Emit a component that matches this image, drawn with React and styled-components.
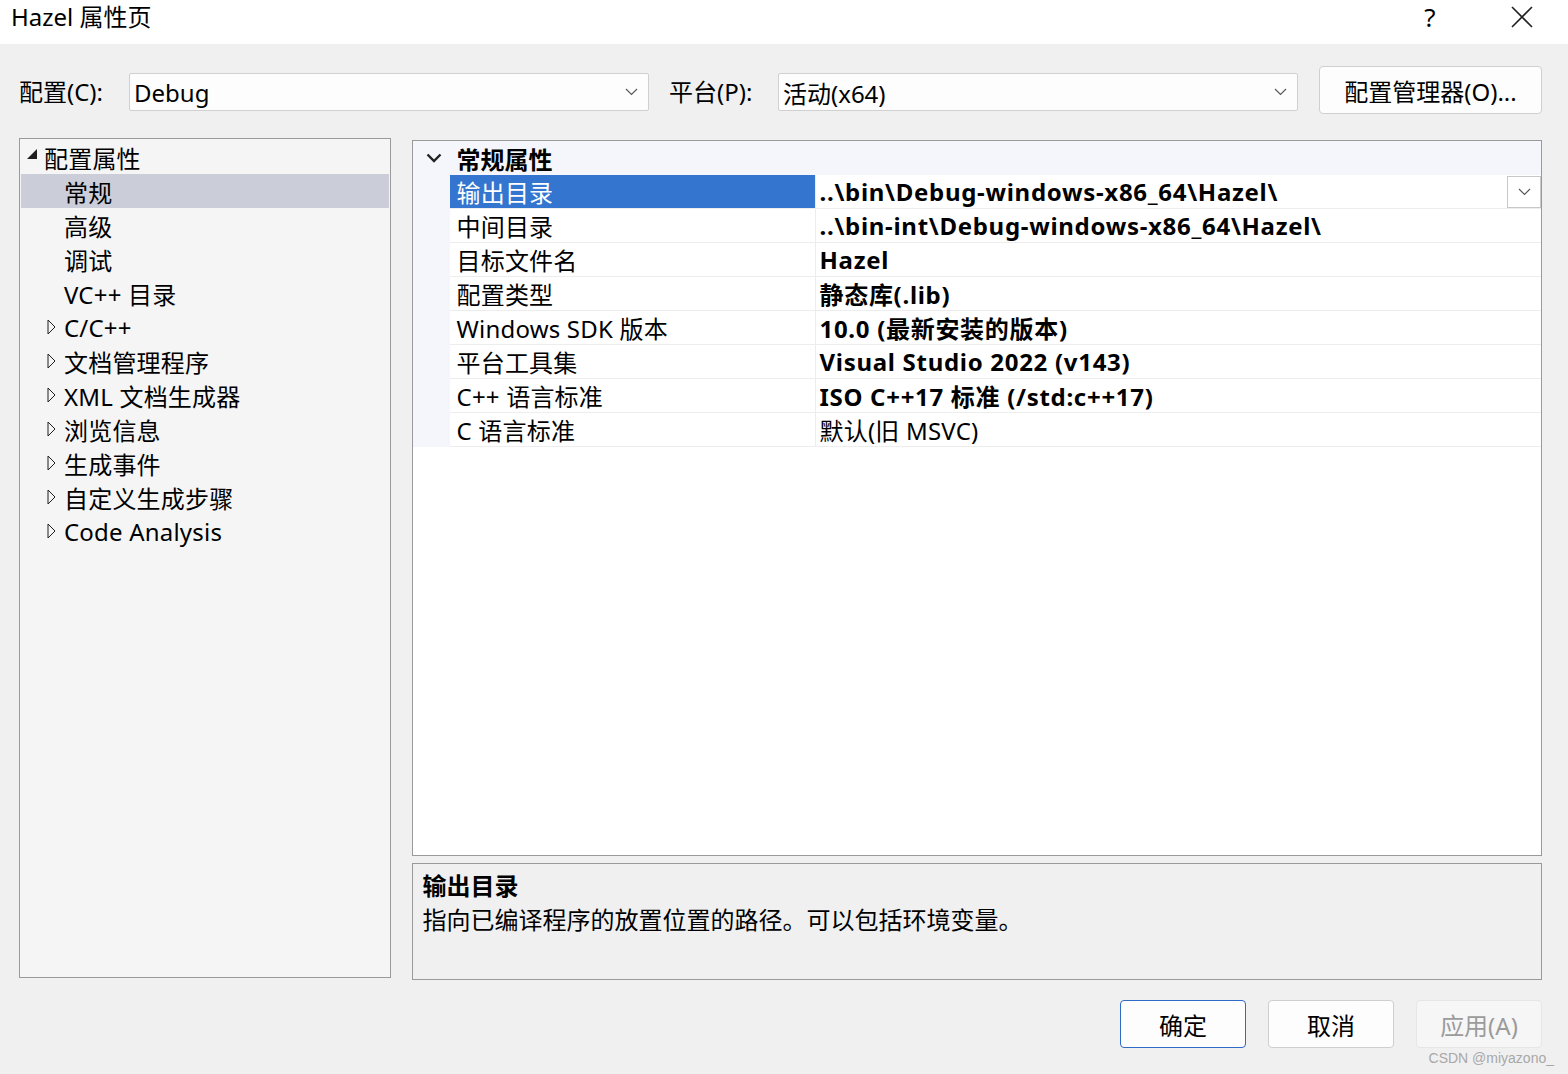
import React from 'react';
import styled, { createGlobalStyle } from 'styled-components';

const GlobalStyle = createGlobalStyle`
  html, body {
    margin: 0;
    padding: 0;
    background: #f0f0f0;
  }
  body {
    font-family: "Noto Sans", "Noto Sans CJK SC", sans-serif;
    color: #000;
  }
`;

const Window = styled.div`
  width: 1568px;
  height: 1074px;
  display: flex;
  flex-direction: column;
  background: #f0f0f0;
  position: relative;
  overflow: hidden;
`;

const TitleBar = styled.div`
  height: 44px;
  background: #fff;
  display: flex;
  align-items: flex-start;
  padding-left: 11px;
  font-size: 24px;
`;

const TitleText = styled.div`
  flex: 1;
  line-height: 34px;
`;

const TitleBtn = styled.div`
  width: 92px;
  height: 34px;
  display: flex;
  align-items: center;
  justify-content: center;
  font-size: 26px;
  line-height: 34px;
`;

const Body = styled.div`
  flex: 1;
  display: flex;
  flex-direction: column;
  padding: 22px 26px 0 19px;
`;

const TopRow = styled.div`
  display: flex;
  align-items: flex-start;
  height: 48px;
`;

const Label = styled.div`
  font-size: 24px;
  line-height: 38px;
  margin-top: 7px;
  width: ${({ w }) => w}px;
`;

const Combo = styled.div`
  width: ${({ w }) => w}px;
  height: 38px;
  margin-top: 7px;
  box-sizing: border-box;
  border: 1px solid #d0d0d0;
  border-radius: 2px;
  background: #fdfdfd;
  display: flex;
  align-items: center;
  padding: 0 10px 0 4px;
  font-size: 24px;
  margin-right: ${({ mr }) => mr || 0}px;
`;

const ComboText = styled.div`
  flex: 1;
`;

const Button = styled.button`
  width: ${({ w }) => w}px;
  height: 48px;
  box-sizing: border-box;
  border-radius: 4px;
  border: 1px solid ${({ primary, disabled }) => (primary ? '#2d6bc6' : disabled ? '#e6e6e6' : '#cfcfcf')};
  background: ${({ disabled }) => (disabled ? '#f6f6f6' : '#fdfdfd')};
  color: ${({ disabled }) => (disabled ? '#9b9b9b' : '#000')};
  font-family: "Noto Sans", "Noto Sans CJK SC", sans-serif;
  font-size: 24px;
  padding: 0;
`;

const Main = styled.div`
  display: flex;
  gap: 21px;
  margin-top: 24px;
`;

const TreePanel = styled.div`
  width: 372px;
  height: 840px;
  box-sizing: border-box;
  border: 1px solid #9a9a9a;
  background: #f5f5f5;
  padding: 1px 1px;
`;

const TreeRow = styled.div`
  height: 34px;
  display: flex;
  align-items: center;
  font-size: 24px;
  letter-spacing: 0.2px;
  padding-left: ${({ indent }) => indent}px;
  background: ${({ selected }) => (selected ? '#cbcdd8' : 'transparent')};
`;

const Expander = styled.span`
  width: 17px;
  display: inline-flex;
  align-items: center;
`;

const RightCol = styled.div`
  width: 1132px;
  display: flex;
  flex-direction: column;
  gap: 7px;
  padding-top: 2px;
`;

const Grid = styled.div`
  height: 716px;
  box-sizing: border-box;
  border: 1px solid #9a9a9a;
  background: #fff;
`;

const CategoryRow = styled.div`
  height: 34px;
  background: #f5f6fb;
  display: flex;
  align-items: center;
  font-size: 24px;
  font-weight: 700;
`;

const CatChevron = styled.span`
  width: 42px;
  display: inline-flex;
  justify-content: center;
  margin-right: 2px;
`;

const PropRow = styled.div`
  height: 34px;
  display: flex;
  font-size: 24px;
`;

const Gutter = styled.div`
  width: 37px;
  background: #f5f6fb;
`;

const NameCell = styled.div`
  width: 366px;
  box-sizing: border-box;
  padding-left: 7px;
  display: flex;
  align-items: center;
  letter-spacing: 0.2px;
  border-bottom: 1px solid #ededed;
  border-right: 1px solid #ededed;
  background: ${({ selected }) => (selected ? '#3375cf' : '#fff')};
  color: ${({ selected }) => (selected ? '#fff' : '#000')};
`;

const ValueCell = styled.div`
  flex: 1;
  box-sizing: border-box;
  padding-left: 4px;
  display: flex;
  align-items: center;
  border-bottom: 1px solid #ededed;
  font-weight: ${({ bold }) => (bold ? 700 : 400)};
  letter-spacing: ${({ bold }) => (bold ? '0.7px' : '0.2px')};
  position: relative;
`;

const ValueBtn = styled.div`
  position: absolute;
  right: 0;
  top: 1px;
  width: 34px;
  height: 32px;
  box-sizing: border-box;
  border: 1px solid #c8c8c8;
  background: #fff;
  display: flex;
  align-items: center;
  justify-content: center;
`;

const Desc = styled.div`
  height: 117px;
  box-sizing: border-box;
  border: 1px solid #9a9a9a;
  background: #f0f0f0;
  padding: 5px 10px;
  font-size: 24px;
  line-height: 34px;
`;

const DescTitle = styled.div`
  font-weight: 700;
`;

const Footer = styled.div`
  display: flex;
  justify-content: flex-end;
  gap: 22px;
  margin-top: 20px;
`;

const Watermark = styled.div`
  position: absolute;
  right: 14px;
  bottom: 8px;
  font-family: "Liberation Sans", Arial, sans-serif;
  font-size: 14px;
  color: #a8a8a8;
`;

const Chevron = ({ color = '#555' }) => (
  <svg width="13" height="8" viewBox="0 0 13 8">
    <path d="M1 1 L6.5 6.5 L12 1" fill="none" stroke={color} strokeWidth="1.1" />
  </svg>
);

const ExpandedTri = () => (
  <svg width="10" height="10" viewBox="0 0 10 10">
    <path d="M0 10 L10 10 L10 0 Z" fill="#1e1e1e" />
  </svg>
);

const CollapsedTri = () => (
  <svg width="9" height="16" viewBox="0 0 9 16">
    <path d="M1 1 L8 8 L1 15 Z" fill="none" stroke="#1e1e1e" strokeWidth="1" />
  </svg>
);

const treeItems = [
  { label: '配置属性', indent: 6, type: 'open' },
  { label: '常规', indent: 43, selected: true },
  { label: '高级', indent: 43 },
  { label: '调试', indent: 43 },
  { label: 'VC++ 目录', indent: 43 },
  { label: 'C/C++', indent: 26, type: 'closed' },
  { label: '文档管理程序', indent: 26, type: 'closed' },
  { label: 'XML 文档生成器', indent: 26, type: 'closed' },
  { label: '浏览信息', indent: 26, type: 'closed' },
  { label: '生成事件', indent: 26, type: 'closed' },
  { label: '自定义生成步骤', indent: 26, type: 'closed' },
  { label: 'Code Analysis', indent: 26, type: 'closed' },
];

const props = [
  { name: '输出目录', value: '..\\bin\\Debug-windows-x86_64\\Hazel\\', bold: true, selected: true },
  { name: '中间目录', value: '..\\bin-int\\Debug-windows-x86_64\\Hazel\\', bold: true },
  { name: '目标文件名', value: 'Hazel', bold: true },
  { name: '配置类型', value: '静态库(.lib)', bold: true },
  { name: 'Windows SDK 版本', value: '10.0 (最新安装的版本)', bold: true },
  { name: '平台工具集', value: 'Visual Studio 2022 (v143)', bold: true },
  { name: 'C++ 语言标准', value: 'ISO C++17 标准 (/std:c++17)', bold: true },
  { name: 'C 语言标准', value: '默认(旧 MSVC)' },
];

export default function App() {
  return (
    <Window>
      <GlobalStyle />
      <TitleBar>
        <TitleText>Hazel 属性页</TitleText>
        <TitleBtn>?</TitleBtn>
        <TitleBtn>
          <svg width="22" height="22" viewBox="0 0 22 22">
            <path d="M1 1 L21 21 M21 1 L1 21" stroke="#222" strokeWidth="1.6" />
          </svg>
        </TitleBtn>
      </TitleBar>
      <Body>
        <TopRow>
          <Label w={110}>配置(C):</Label>
          <Combo w={520} mr={20}>
            <ComboText>Debug</ComboText>
            <Chevron />
          </Combo>
          <Label w={109}>平台(P):</Label>
          <Combo w={520} mr={21}>
            <ComboText>活动(x64)</ComboText>
            <Chevron />
          </Combo>
          <Button w={223}>配置管理器(O)...</Button>
        </TopRow>
        <Main>
          <TreePanel>
            {treeItems.map((it) => (
              <TreeRow key={it.label} indent={it.indent} selected={it.selected}>
                {it.type === 'open' && (
                  <Expander style={{ marginTop: -6 }}>
                    <ExpandedTri />
                  </Expander>
                )}
                {it.type === 'closed' && (
                  <Expander>
                    <CollapsedTri />
                  </Expander>
                )}
                {it.label}
              </TreeRow>
            ))}
          </TreePanel>
          <RightCol>
            <Grid>
              <CategoryRow>
                <CatChevron>
                  <svg width="16" height="10" viewBox="0 0 16 10">
                    <path d="M1.5 1.5 L8 8 L14.5 1.5" fill="none" stroke="#222" strokeWidth="2.4" />
                  </svg>
                </CatChevron>
                常规属性
              </CategoryRow>
              {props.map((p) => (
                <PropRow key={p.name}>
                  <Gutter />
                  <NameCell selected={p.selected}>{p.name}</NameCell>
                  <ValueCell bold={p.bold}>
                    {p.value}
                    {p.selected && (
                      <ValueBtn>
                        <Chevron />
                      </ValueBtn>
                    )}
                  </ValueCell>
                </PropRow>
              ))}
            </Grid>
            <Desc>
              <DescTitle>输出目录</DescTitle>
              <div>指向已编译程序的放置位置的路径。可以包括环境变量。</div>
            </Desc>
          </RightCol>
        </Main>
        <Footer>
          <Button w={126} primary>确定</Button>
          <Button w={126}>取消</Button>
          <Button w={126} disabled>应用(A)</Button>
        </Footer>
      </Body>
      <Watermark>CSDN @miyazono_</Watermark>
    </Window>
  );
}
